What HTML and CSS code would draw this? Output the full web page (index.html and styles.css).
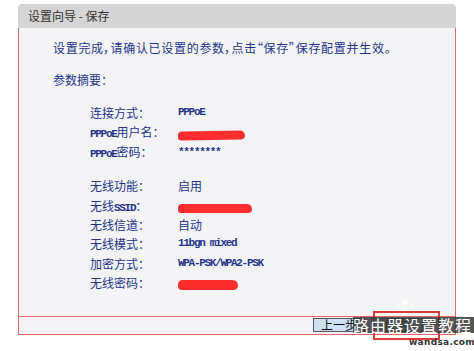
FILE: index.html
```html
<!DOCTYPE html>
<html>
<head>
  <meta charset="utf-8">
  <link rel="stylesheet" href="styles.css">
</head>
<body>
<div class="panel">
  <div class="panel-head">设置向导 - 保存</div>
  <div class="panel-body">
    <p class="intro">设置完成，请确认已设置的参数，点击“保存”保存配置并生效。</p>
    <p class="summary">参数摘要：</p>

    <!-- 宽带参数 -->
    <div class="params">
      <div class="row"><span class="label">连接方式：</span><span class="value latin">PPPoE</span></div>
      <div class="row"><span class="label"><span class="latin">PPPoE</span>用户名：</span><span class="value"><span class="scribble s-user"></span></span></div>
      <div class="row"><span class="label"><span class="latin">PPPoE</span>密码：</span><span class="value latin">********</span></div>
    </div>

    <!-- 无线参数 -->
    <div class="params wifi">
      <div class="row"><span class="label">无线功能：</span><span class="value">启用</span></div>
      <div class="row"><span class="label">无线<span class="latin">SSID</span>：</span><span class="value"><span class="scribble s-ssid"></span></span></div>
      <div class="row"><span class="label">无线信道：</span><span class="value">自动</span></div>
      <div class="row"><span class="label">无线模式：</span><span class="value latin">11bgn mixed</span></div>
      <div class="row"><span class="label">加密方式：</span><span class="value latin">WPA-PSK/WPA2-PSK</span></div>
      <div class="row"><span class="label">无线密码：</span><span class="value"><span class="scribble s-pass"></span></span></div>
    </div>
  </div>
  <div class="panel-foot">
    <button type="button" class="btn">上一步</button>
    <button type="button" class="btn">保 存</button>
  </div>
</div>

<!-- 水印 -->
<div class="watermark">
  <svg class="paw" width="24" height="16" viewBox="0 0 24 16">
    <circle cx="12" cy="4" r="3" fill="#fff"/>
    <circle cx="5" cy="8" r="2.5" fill="#fff"/>
    <circle cx="19" cy="8" r="2.5" fill="#fff"/>
    <ellipse cx="12" cy="13" rx="5" ry="3" fill="#fff"/>
  </svg>
  <div class="wm-frame"></div>
  <div class="wm-text">路由器设置教程</div>
  <div class="wm-site">wandsa.com</div>
</div>
</body>
</html>
```

FILE: styles.css
```css
body {
  margin: 0;
  background: #fff;
  font-family: "Noto Sans CJK SC", sans-serif;
  font-size: 12px;
  font-feature-settings: "palt";
}
p {
  margin: 0;
}

/* 面板 */
.panel {
  width: 438px;
  margin: 4px 0 0 18px;
}
.panel-head {
  height: 24px;
  line-height: 24px;
  padding-left: 10px;
  background: #d5d5d5;
  color: #333;
  border-radius: 4px 4px 0 0;
}
.panel-body {
  height: 288px;
  padding: 10px 0 0 34px;
  box-sizing: border-box;
  background: #f4f4f6;
  border: 1px solid #e06868;
  border-top: none;
  border-bottom: none;
  color: #25338a;
}
.intro, .summary {
  line-height: 20px;
}
.intro {
  letter-spacing: 0.7px;
}
.summary {
  margin-top: 12px;
}

/* 参数列表 */
.params {
  margin-top: 13px;
  padding-left: 37px;
}
.params.wifi {
  margin-top: 15px;
}
.row {
  display: grid;
  grid-template-columns: 88px auto;
  height: 19.4px;
  line-height: 19.4px;
  align-items: center;
}
.latin {
  font-family: "Liberation Mono", monospace;
  font-size: 11px;
  font-weight: bold;
  letter-spacing: -1.3px;
}
.scribble {
  display: inline-block;
  vertical-align: middle;
  height: 9px;
  background: #ff2e2e;
  border-radius: 5px 6px 5px 4px;
}
.s-user {
  width: 67px;
  transform: rotate(-1deg);
}
.s-ssid {
  width: 74px;
}
.s-pass {
  width: 60px;
  height: 10px;
}

/* 底部按钮 */
.panel-foot {
  height: 19px;
  padding: 1px 0 0 294px;
  box-sizing: border-box;
  background: #f4f4f6;
  border: 1px solid #e06868;
  display: flex;
  gap: 6px;
}
.btn {
  flex: none;
  width: 52px;
  height: 14px;
  padding: 0;
  font-family: "Noto Sans CJK SC", sans-serif;
  font-size: 12px;
  line-height: 12px;
  color: #111;
  background: #cfe0f4;
  border: 1px solid #556;
}

/* 水印 */
.watermark {
  position: absolute;
  left: 353px;
  top: 296px;
  width: 121px;
  height: 55px;
}
.paw {
  position: absolute;
  left: 40px;
  top: 2px;
  opacity: 0.85;
}
.wm-frame {
  position: absolute;
  left: 20px;
  top: 15px;
  width: 63px;
  height: 25px;
  border: 2px solid #e03a3a;
}
.wm-text {
  position: absolute;
  left: 0;
  top: 21px;
  width: 121px;
  height: 16px;
  line-height: 16px;
  background: rgba(55, 55, 55, 0.85);
  color: #fff;
  font-size: 16px;
  letter-spacing: 1px;
  white-space: nowrap;
}
.wm-site {
  position: absolute;
  left: 56px;
  top: 41px;
  font-family: "DejaVu Sans", sans-serif;
  font-size: 9px;
  font-weight: bold;
  letter-spacing: 0.3px;
  color: #333;
}
```
